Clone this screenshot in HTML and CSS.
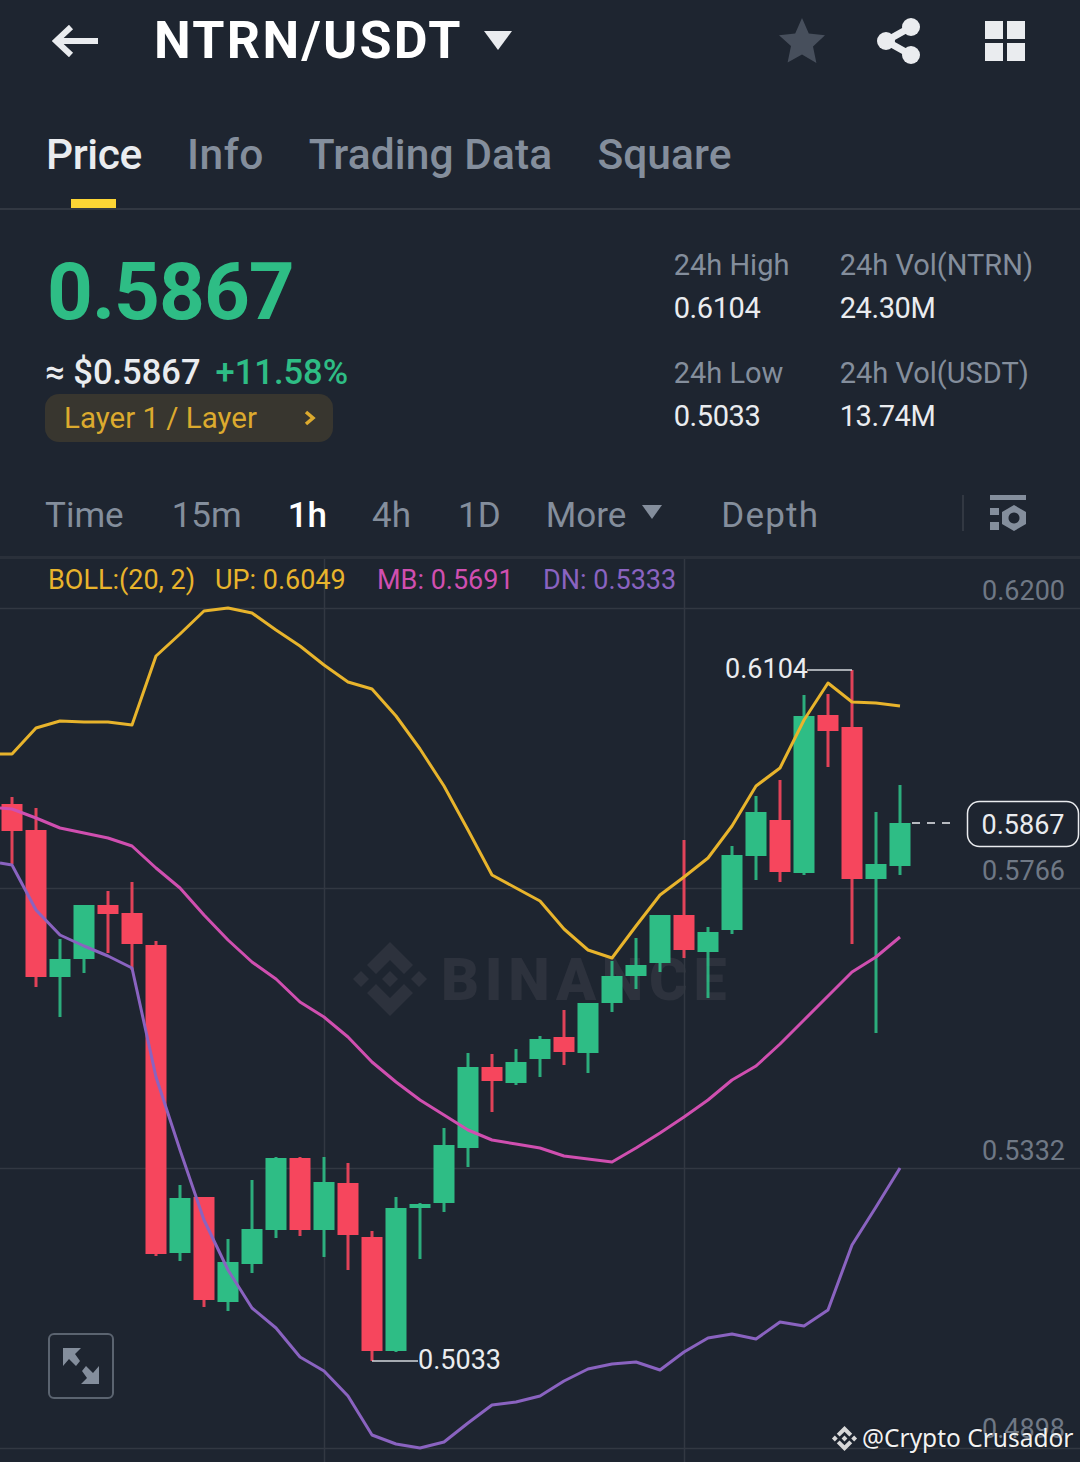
FILE: index.html
```html
<!DOCTYPE html>
<html lang="en">
<head>
<meta charset="utf-8">
<title>NTRN/USDT</title>
<link rel="stylesheet" href="styles.css">
</head>
<body>
<div class="page">
  <header class="topbar">
    <svg class="ico-back" viewBox="0 0 46 32"><path d="M46 16H5M19 2 4 16l15 14"/></svg>
    <h1 class="pair">NTRN/USDT</h1>
    <span class="caret-lg"></span>
    <span class="spacer"></span>
    <svg class="ico-star" viewBox="0 0 46 46"><path d="M23 0l6.800 15.500 16.200 1.700-12 11.300 3.400 16.500L23 36.500 8.600 44.500 12 28 0 17.200l16.200-1.700z"/></svg>
    <svg class="ico-share" viewBox="0 0 44 46"><circle cx="34" cy="9" r="9"/><circle cx="34" cy="37" r="9"/><circle cx="9" cy="23" r="9"/><path d="M34 9 9 23l25 14"/></svg>
    <svg class="ico-grid" viewBox="0 0 40 40"><path d="M0 0h18v18H0zM22 0h18v18H22zM0 22h18v18H0zM22 22h18v18H22z"/></svg>
  </header>

  <nav class="tabs">
    <a class="tab tab-on">Price</a>
    <a class="tab tab-info">Info</a>
    <a class="tab">Trading Data</a>
    <a class="tab">Square</a>
  </nav>

  <section class="summary">
    <div class="quote">
      <div class="last">0.5867</div>
      <div class="fiat"><span>≈ $0.5867</span><span class="pct">+11.58%</span></div>
      <div class="chip"><span>Layer 1 / Layer</span><svg class="chev" viewBox="0 0 12 16"><path d="M2 2l7 6-7 6"/></svg></div>
    </div>
    <div class="stats">
      <div class="stat"><span class="k">24h High</span><span class="v">0.6104</span></div>
      <div class="stat"><span class="k">24h Vol(NTRN)</span><span class="v">24.30M</span></div>
      <div class="stat"><span class="k">24h Low</span><span class="v">0.5033</span></div>
      <div class="stat"><span class="k">24h Vol(USDT)</span><span class="v">13.74M</span></div>
    </div>
  </section>

  <nav class="intervals">
    <a class="iv iv-time">Time</a>
    <a class="iv iv-15m">15m</a>
    <a class="iv iv-on iv-1h">1h</a>
    <a class="iv iv-4h">4h</a>
    <a class="iv iv-1d">1D</a>
    <a class="iv iv-more">More</a>
    <span class="caret-sm"></span>
    <a class="iv iv-depth">Depth</a>
    <span class="spacer"></span>
    <span class="iv-sep"></span>
    <svg class="ico-set" viewBox="0 0 38 36"><path d="M1 0h36v5H1zM1 13h9v7H1zM1 27h9v8H1z"/><path fill-rule="evenodd" d="M25 10l12 7v12l-12 7-12-7V17zM25 17.500a5.500 5.500 0 1 0 .01 0z"/></svg>
  </nav>

  <section class="chart">
    <div class="legend">
      <span class="l-boll">BOLL:(20, 2)</span>
      <span class="l-up">UP: 0.6049</span>
      <span class="l-mb">MB: 0.5691</span>
      <span class="l-dn">DN: 0.5333</span>
    </div>
    <svg class="plot" viewBox="0 559 1080 903">
      <path class="wm" d="M390 942l23 23-9 9-14-14-14 14-9-9zM390 1016l23-23-9-9-14 14-14-14-9 9zM390 971l8 8-8 8-8-8zM361 971l8 8-8 8-8-8zM419 971l8 8-8 8-8-8z"/>
      <text class="wm wm-t" x="441" y="1000">BINANCE</text>
      <path class="grid" d="M0 608.500H1080M0 888.500H1080M0 1168.500H1080M0 1448.500H1080M324.500 559V1462M684.500 559V1462"/>
      <text class="ax" x="1065" y="600">0.6200</text>
      <text class="ax" x="1065" y="880">0.5766</text>
      <text class="ax" x="1065" y="1160">0.5332</text>
      <text class="ax" x="1065" y="1438">0.4898</text>

      <path class="wick-r" d="M12 797V864M36 808V987M108 891V953M132 882V970M156 941V1256M204 1197V1307M300 1157V1236M348 1163V1270M372 1231V1361M492 1054V1112M564 1010V1065M684 840V958M780 780V882M828 694V767M852 670V944"/>
      <path class="body-r" d="M1.500 804h21V831h-21zM25.500 830h21V977h-21zM97.500 905h21V914h-21zM121.500 913h21V944h-21zM145.500 945h21V1254h-21zM193.500 1197h21V1300h-21zM289.500 1158h21V1230h-21zM337.500 1183h21V1235h-21zM361.500 1237h21V1351h-21zM481.500 1067h21V1081h-21zM553.500 1037h21V1052h-21zM673.500 915h21V950h-21zM769.500 820h21V872h-21zM817.500 715h21V731h-21zM841.500 727h21V879h-21z"/>
      <path class="wick-g" d="M60 939V1017M84 905V973M180 1185V1261M228 1239V1311M252 1180V1273M276 1157V1238M324 1157V1257M396 1197V1352M420 1203V1259M444 1128V1212M468 1053V1167M516 1049V1085M540 1036V1077M588 1003V1073M612 961V1012M636 938V989M660 915V972M708 927V998M732 846V934M756 796V880M804 695V875M876 812V1033M900 785V875"/>
      <path class="body-g" d="M49.500 959h21V977h-21zM73.500 905h21V959h-21zM169.500 1198h21V1253h-21zM217.500 1262h21V1302h-21zM241.500 1229h21V1264h-21zM265.500 1158h21V1230h-21zM313.500 1182h21V1230h-21zM385.500 1208h21V1351h-21zM409.500 1204h21V1208h-21zM433.500 1145h21V1203h-21zM457.500 1067h21V1148h-21zM505.500 1062h21V1083h-21zM529.500 1039h21V1059h-21zM577.500 1003h21V1053h-21zM601.500 976h21V1003h-21zM625.500 965h21V976h-21zM649.500 915h21V963h-21zM697.500 932h21V952h-21zM721.500 855h21V930h-21zM745.500 812h21V856h-21zM793.500 716h21V873h-21zM865.500 864h21V879h-21zM889.500 823h21V866h-21z"/>

      <polyline class="ln-up" points="0,754 12,754 36,728 60,721 84,722 108,722 132,725 156,656 180,634 204,611 228,608 252,613 276,630 300,646 324,665 348,682 372,689 396,716 420,749 444,786 468,830 492,875 516,888 540,901 564,929 588,950 612,958 636,926 660,895 684,877 708,858 732,826 756,786 780,768 804,720 828,683 852,702 876,703 900,706"/>
      <polyline class="ln-mb" points="0,808 12,809 36,818 60,828 84,833 108,838 132,846 156,868 180,888 204,915 228,940 252,962 276,979 300,1002 324,1017 348,1037 372,1062 396,1082 420,1100 444,1115 468,1130 492,1140 516,1144 540,1148 564,1156 588,1159 612,1162 636,1148 660,1133 684,1117 708,1100 732,1080 756,1066 780,1044 804,1020 828,996 852,972 876,957 900,937"/>
      <polyline class="ln-dn" points="0,863 12,865 36,910 60,935 84,946 108,956 132,968 156,1077 180,1150 204,1220 228,1270 252,1308 276,1328 300,1357 324,1371 348,1396 372,1435 396,1444 420,1448 444,1442 468,1423 492,1405 516,1402 540,1396 564,1381 588,1369 612,1364 636,1362 660,1370 684,1352 708,1338 732,1334 756,1339 780,1322 804,1326 828,1310 852,1245 876,1207 900,1168"/>

      <path class="lead" d="M807 670H852"/>
      <text class="ext" x="725" y="678">0.6104</text>
      <path class="lead" d="M372 1361H418"/>
      <text class="ext" x="418" y="1369">0.5033</text>
      <path class="dash" d="M912 823H953"/>
      <rect class="tag" x="967.500" y="801.500" width="111" height="45" rx="12"/>
      <text class="tag-t" x="1023" y="833.500">0.5867</text>
    </svg>
    <button class="expand" type="button" aria-label="Expand">
      <svg viewBox="0 0 36 36"><path d="M0 0h18l-6 6 5 7-4 5-7-7-6 7zM36 36H18l6-6-5-7 4-5 7 7 6-7z"/></svg>
    </button>
    <div class="credit">
      <svg viewBox="-15 -15 30 30"><path d="M0-13l8 8-3 3-5-5-5 5-3-3zM0 13l8-8-3-3-5 5-5-5-3 3zM0-3l3 3-3 3-3-3zM-10-3l3 3-3 3-3-3zM10-3l3 3-3 3-3-3z"/></svg>
      <span>@Crypto Crusador</span>
    </div>
  </section>
</div>
</body>
</html>
```
FILE: styles.css
```css
* { box-sizing: border-box; }
html, body { margin: 0; padding: 0; background: #1e2530; }
body { font-family: Roboto, "Noto Sans", sans-serif; color: #eaecef; }
.page { width: 1080px; height: 1462px; overflow: hidden; display: flex; flex-direction: column; }
.spacer { flex: 1; }

.topbar { height: 82px; display: flex; align-items: center; padding: 0 55px 0 52px; }
.ico-back { width: 46px; height: 32px; fill: none; stroke: #eaecef; stroke-width: 6; }
.pair { margin: 0 0 0 56px; font-size: 52px; font-weight: 700; letter-spacing: 2.300px; color: #fff; line-height: 82px; }
.caret-lg { margin: 0 0 2px 21px; width: 0; height: 0; border: solid transparent; border-width: 19px 14px 0; border-top-color: #eaecef; }
.ico-star { width: 46px; height: 46px; fill: #474f5c; margin-right: 52px; }
.ico-share { width: 44px; height: 46px; fill: #eaecef; stroke: #eaecef; stroke-width: 7; margin-right: 64px; }
.ico-share circle { stroke: none; }
.ico-share path { fill: none; }
.ico-grid { width: 40px; height: 40px; fill: #eaecef; }

.tabs { height: 128px; padding: 45px 0 0 46px; display: flex; gap: 45px; border-bottom: 2px solid #323842; }
.tab { position: relative; font-size: 42.500px; line-height: 56px; color: #848e9c; font-weight: 500; height: 81px; letter-spacing: .1px; }
.tab-on { color: #eaecef; letter-spacing: -.4px; }
.tab-info { letter-spacing: .5px; }
.tab-on::after { content: ""; position: absolute; left: 25px; bottom: 0; width: 45px; height: 9px; background: #fcd535; }

.summary { height: 245px; padding: 0 47px 0 45px; display: flex; justify-content: space-between; }
.last { margin: 36px 0 0 2px; font-size: 80px; line-height: 92px; font-weight: 700; color: #2ebd85; letter-spacing: -1px; }
.fiat { display: flex; gap: 15px; margin-top: 13px; font-size: 34.500px; line-height: 42px; font-weight: 500; }
.pct { color: #2ebd85; }
.chip { margin-top: 1px; width: 288px; height: 48px; padding: 0 17px 0 19px; border-radius: 14px; background: #38362f; color: #dcaa2e; font-size: 29.500px; display: flex; align-items: center; justify-content: space-between; }
.chev { width: 12px; height: 16px; fill: none; stroke: #dcaa2e; stroke-width: 3.500; }
.stats { margin-top: 34px; display: grid; grid-template-columns: 166px auto; row-gap: 22px; align-content: start; }
.stat { display: flex; flex-direction: column; font-size: 29px; line-height: 43px; }
.k { color: #848e9c; }
.v { color: #eaecef; letter-spacing: -.4px; }

.intervals { height: 115px; padding: 30px 53px 0 45px; display: flex; align-items: center; border-bottom: 3px solid #2a303a; font-size: 35px; color: #848e9c; }
.iv { line-height: 44px; }
.iv-on { color: #fff; font-weight: 500; }
.iv-15m { margin-left: 48px; }
.iv-1h { margin-left: 46px; }
.iv-4h { margin-left: 45px; }
.iv-1d { margin-left: 47px; }
.iv-more { margin-left: 45px; }
.caret-sm { margin: 0 0 8px 16px; width: 0; height: 0; border: solid transparent; border-width: 14px 10px 0; border-top-color: #848e9c; }
.iv-depth { margin-left: 59px; letter-spacing: 1.200px; }
.iv-sep { width: 2px; height: 36px; background: #323842; margin: 0 25px 6px 0; }
.ico-set { width: 38px; height: 36px; fill: #848e9c; margin-bottom: 6px; }

.chart { position: relative; flex: 1; }
.plot { display: block; width: 1080px; height: 903px; }
.legend { position: absolute; left: 48px; top: 3px; display: flex; font-size: 27px; line-height: 36px; z-index: 1; }
.legend span { white-space: nowrap; }
.l-boll { color: #e8b42c; width: 167px; }
.l-up { color: #e8b42c; width: 162px; }
.l-mb { color: #d04fb0; width: 166px; }
.l-dn { color: #8a63c0; }

.grid { stroke: #323842; stroke-width: 1.500; fill: none; }
.wm { fill: #2d323d; }
.wm-t { font-size: 59px; font-weight: 900; letter-spacing: 5.700px; }
.ax { font-size: 27px; fill: #6f7885; text-anchor: end; }
.wick-r { stroke: #f6465d; stroke-width: 3; fill: none; opacity: .9; }
.wick-g { stroke: #2ebd85; stroke-width: 3; fill: none; opacity: .9; }
.body-r { fill: #f6465d; }
.body-g { fill: #2ebd85; }
.ln-up, .ln-mb, .ln-dn { fill: none; stroke-width: 3; stroke-linejoin: round; }
.ln-up { stroke: #e8b42c; }
.ln-mb { stroke: #d04fb0; }
.ln-dn { stroke: #8a63c0; }
.lead { stroke: #d5d8dc; stroke-width: 1.500; fill: none; }
.ext { font-size: 27px; fill: #eaecef; }
.dash { stroke: #eaecef; stroke-width: 1.500; stroke-dasharray: 8 7; fill: none; }
.tag { fill: #1e2530; stroke: #eaecef; stroke-width: 1.500; }
.tag-t { font-size: 27px; fill: #eaecef; text-anchor: middle; }

.expand { position: absolute; left: 48px; top: 774px; width: 66px; height: 66px; padding: 0; background: transparent; border: 2px solid #5b6470; border-radius: 6px; display: flex; align-items: center; justify-content: center; }
.expand svg { width: 36px; height: 36px; fill: #848e9c; }
.credit { position: absolute; left: 830px; top: 862px; display: flex; align-items: center; gap: 3px; font-family: "Noto Sans", sans-serif; font-size: 24.500px; line-height: 34px; color: #f2f2f2; white-space: nowrap; text-shadow: 0 0 2px rgba(0,0,0,.45); }
.credit svg { width: 29px; height: 29px; fill: #d8d8d8; }
```
